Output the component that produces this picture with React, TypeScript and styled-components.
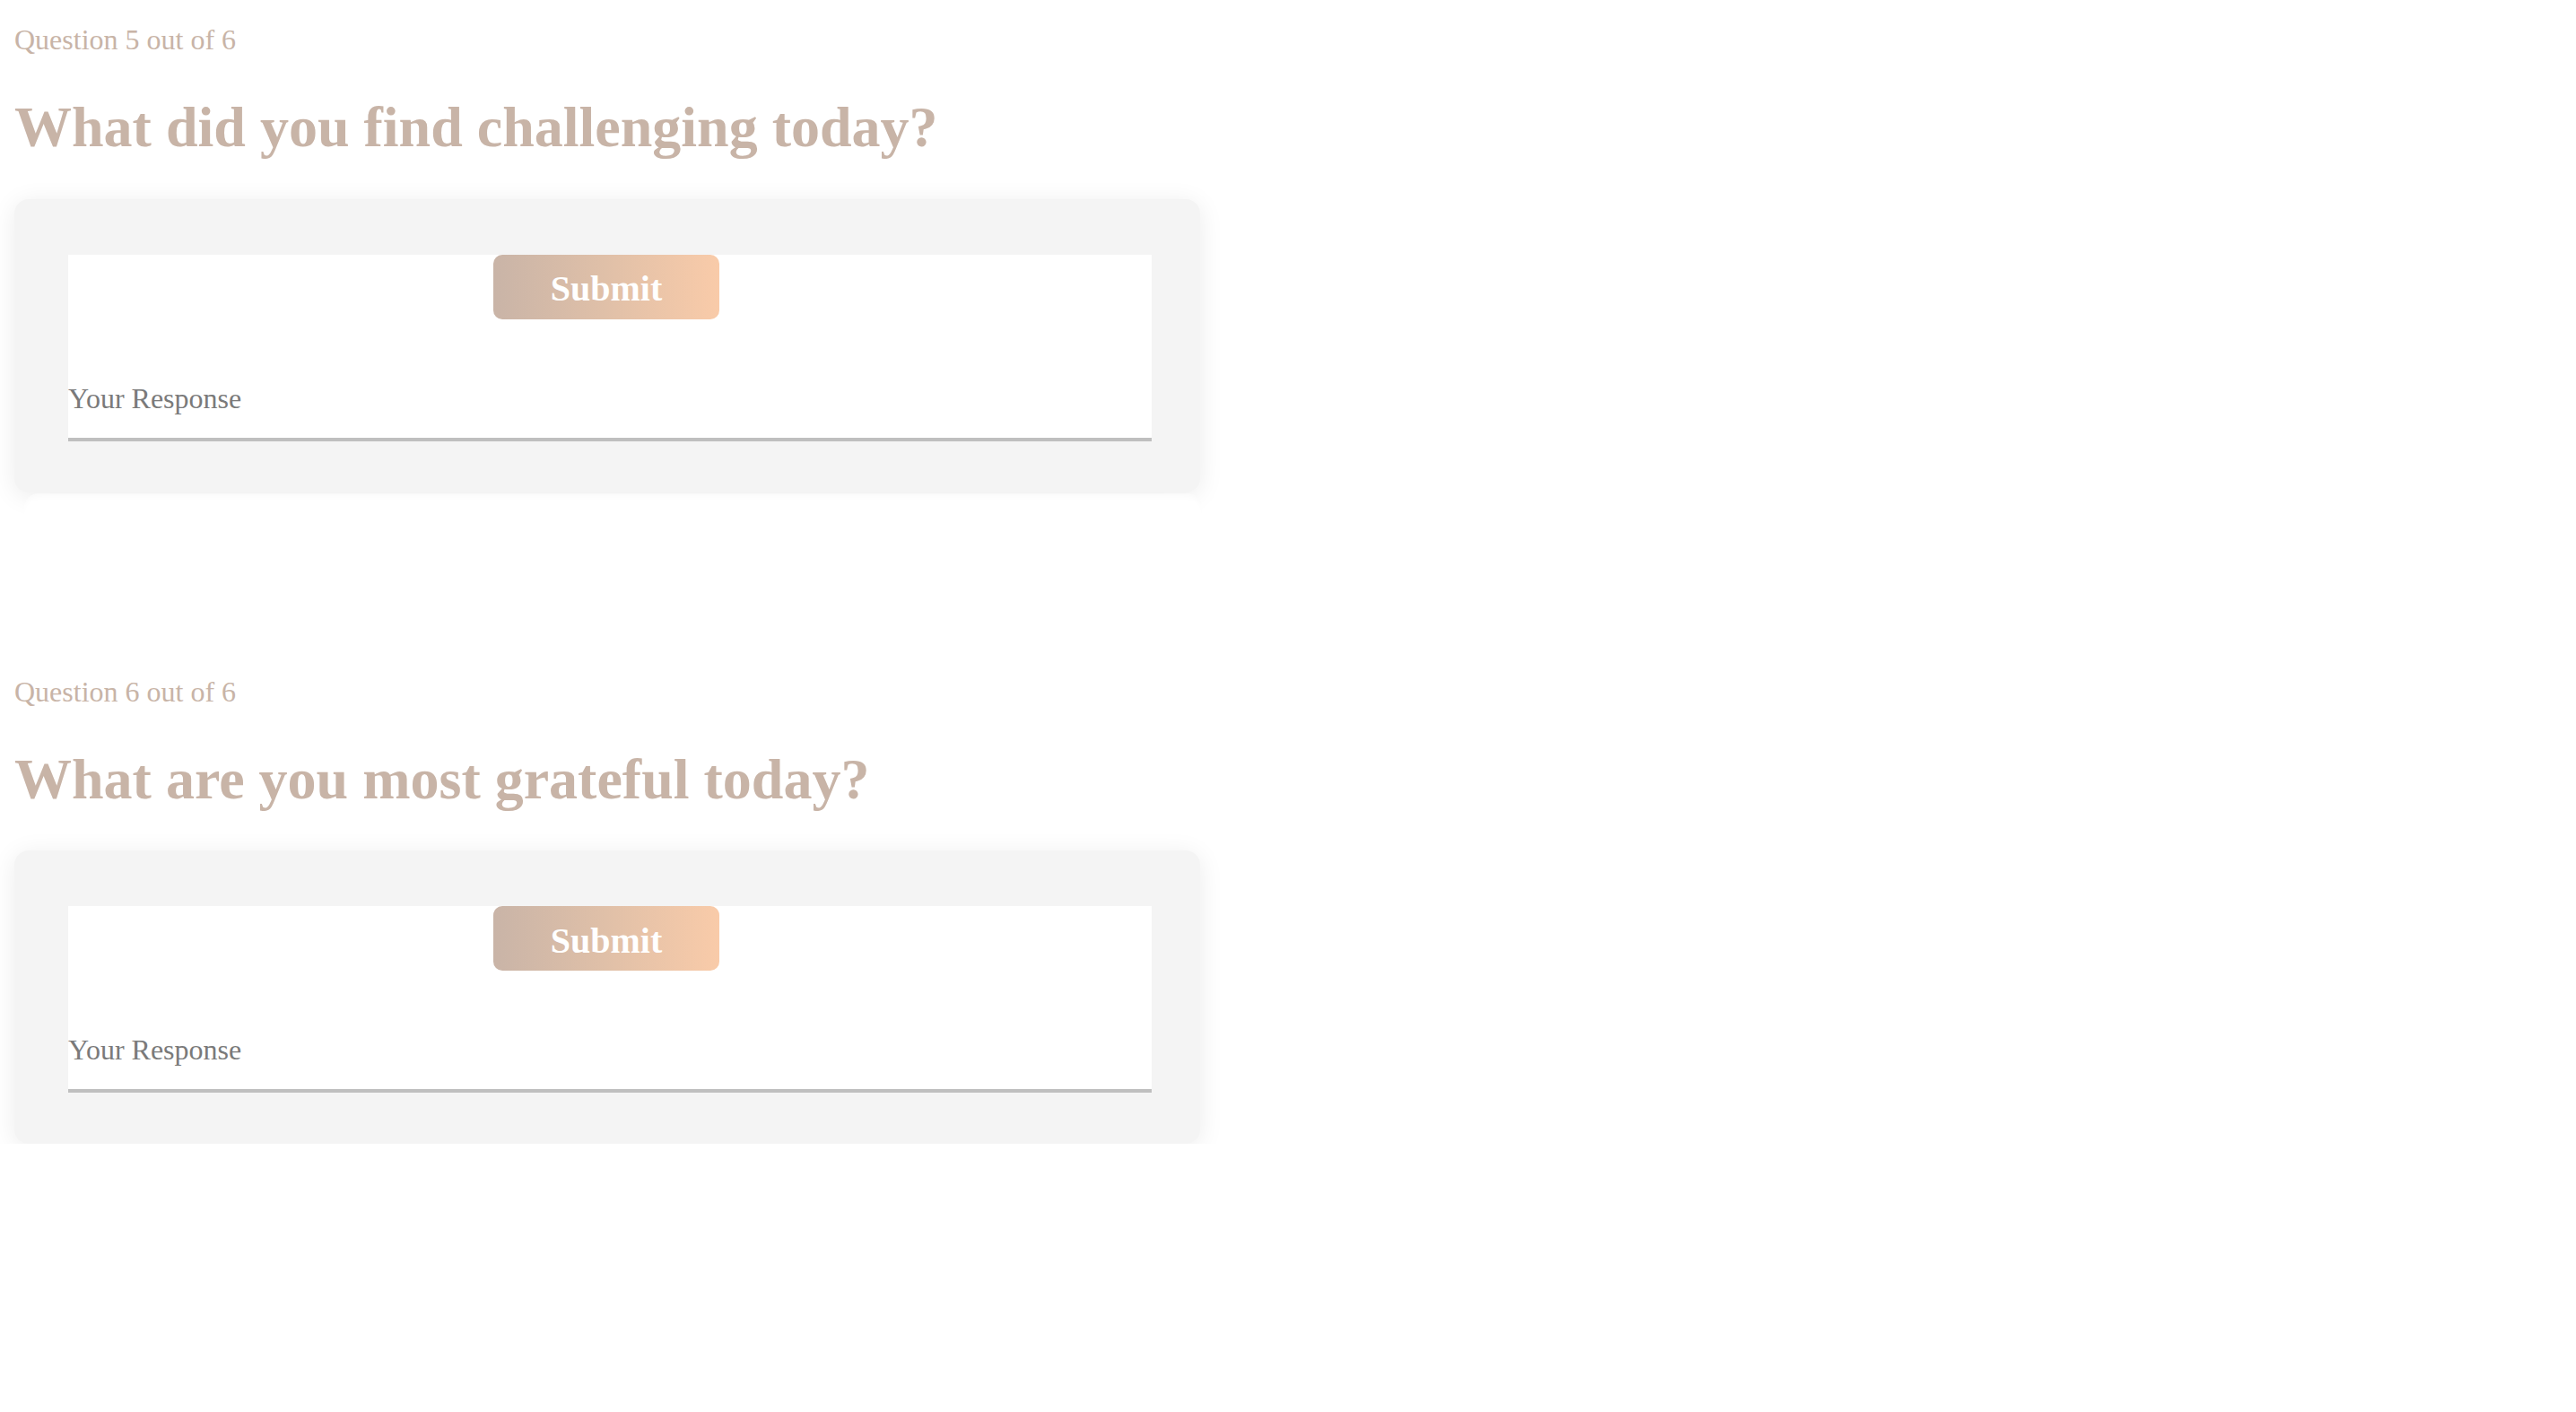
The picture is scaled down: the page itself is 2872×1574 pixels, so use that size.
import React from "react";
import styled, { createGlobalStyle } from "styled-components";

const GlobalStyle = createGlobalStyle`
    html, body {
        margin: 0;
        padding: 0;
        background: #ffffff;
    }
    body {
        font-family: "Liberation Serif", "Times New Roman", serif;
    }
`;

const tan = "#c8b4a7";

const Page = styled.div`
    padding: 0 16px;
`;

const Section = styled.section`
    padding-top: 26px;
    display: flex;
    flex-direction: column;
`;

const QuestionCount = styled.p`
    margin: 0;
    font-size: 32px;
    line-height: 36px;
    color: ${tan};
`;

const Heading = styled.h1`
    margin: 43px 0 42.6px;
    font-size: 64px;
    line-height: 74px;
    font-weight: bold;
    color: ${tan};
`;

const Card = styled.div`
    position: relative;
    box-sizing: border-box;
    width: 1322px;
    padding: 62px 54px 57px 60px;
    background: #f4f4f4;
    border-radius: 16px;
    box-shadow: 0 4px 28px rgba(0, 0, 0, 0.08);
`;

const Field = styled.div`
    display: flex;
    flex-direction: column;
    background: #ffffff;
    border-bottom: 4px solid #bfbfbf;
`;

const ButtonRow = styled.div`
    display: flex;
    justify-content: center;
`;

const SubmitButton = styled.button`
    width: 252px;
    height: 72px;
    margin-right: 8px;
    border: none;
    border-radius: 10px;
    background: linear-gradient(90deg, #c9b4a7 0%, #e0c0a8 50%, #f9cba9 100%);
    color: #ffffff;
    font-family: "Liberation Serif", "Times New Roman", serif;
    font-size: 40px;
    font-weight: bold;
    line-height: 46px;
    padding: 5px 0 0;
    cursor: pointer;
`;

const ResponseLabel = styled.label`
    display: block;
    margin-top: 70px;
    padding-bottom: 26px;
    font-size: 32px;
    line-height: 36px;
    color: #7a7a7a;
`;

const Divider = styled.div`
    position: relative;
    z-index: 1;
    width: 1313px;
    height: 177px;
    margin: 1px 0 0 11px;
    background: #ffffff;
    border-radius: 16px 16px 0 0;
    box-shadow: inset 0 7px 8px -5px rgba(0, 0, 0, 0.03);
`;

type Question = {
    index: number;
    total: number;
    text: string;
};

const questions: Question[] = [
    { index: 5, total: 6, text: "What did you find challenging today?" },
    { index: 6, total: 6, text: "What are you most grateful today?" }
];

const QuestionBlock = ({ q }: { q: Question }) => (
    <Section>
        <QuestionCount>
            Question {q.index} out of {q.total}
        </QuestionCount>
        <Heading>{q.text}</Heading>
        <Card>
            <Field>
                <ButtonRow>
                    <SubmitButton type="button">Submit</SubmitButton>
                </ButtonRow>
                <ResponseLabel>Your Response</ResponseLabel>
            </Field>
        </Card>
    </Section>
);

const App = () => {
    return (
        <Page>
            <GlobalStyle />
            {questions.map((q, i) => (
                <React.Fragment key={q.index}>
                    <QuestionBlock q={q} />
                    {i < questions.length - 1 && <Divider />}
                </React.Fragment>
            ))}
        </Page>
    );
};

export default App;
